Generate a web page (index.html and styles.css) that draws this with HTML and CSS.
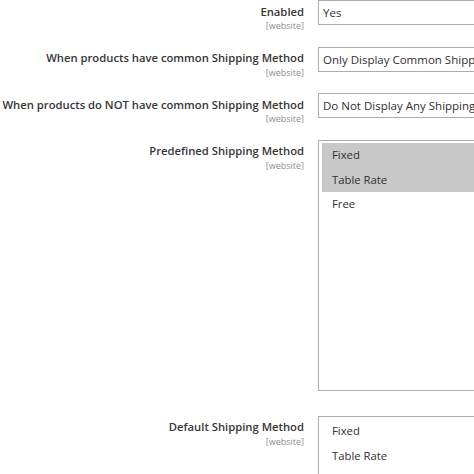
FILE: index.html
```html
<!DOCTYPE html>
<html>
<head>
<meta charset="utf-8">
<link rel="stylesheet" href="styles.css">
</head>
<body>
<div class="form">
  <div class="row">
    <div class="label"><span class="name">Enabled</span><span class="scope">[website]</span></div>
    <div class="control"><div class="select">Yes</div></div>
  </div>
  <div class="row">
    <div class="label"><span class="name">When products have common Shipping Method</span><span class="scope">[website]</span></div>
    <div class="control"><div class="select">Only Display Common Shipping Method</div></div>
  </div>
  <div class="row">
    <div class="label"><span class="name">When products do NOT have common Shipping Method</span><span class="scope">[website]</span></div>
    <div class="control"><div class="select">Do Not Display Any Shipping Method</div></div>
  </div>
  <div class="row row-list">
    <div class="label"><span class="name">Predefined Shipping Method</span><span class="scope">[website]</span></div>
    <div class="control">
      <div class="listbox tall">
        <div class="option selected">Fixed</div>
        <div class="option selected">Table Rate</div>
        <div class="option">Free</div>
      </div>
    </div>
  </div>
  <div class="row">
    <div class="label"><span class="name">Default Shipping Method</span><span class="scope">[website]</span></div>
    <div class="control">
      <div class="listbox short">
        <div class="option">Fixed</div>
        <div class="option">Table Rate</div>
        <div class="option">Free</div>
      </div>
    </div>
  </div>
</div>
</body>
</html>
```
FILE: styles.css
```css
html, body {
  margin: 0;
  padding: 0;
  background: #fff;
  overflow: hidden;
}
body {
  font-family: "Open Sans", "Liberation Sans", sans-serif;
  color: #303030;
  width: 474px;
  height: 474px;
}
.form {
  display: flex;
  flex-direction: column;
  gap: 21.5px;
}
.row {
  display: grid;
  grid-template-columns: 304px 200px;
  column-gap: 14px;
  align-items: start;
}
.row-list {
  margin-bottom: 3.5px;
}
.label {
  display: flex;
  flex-direction: column;
  align-items: flex-end;
  text-align: right;
  padding-top: 4.5px;
  height: 25px;
  box-sizing: border-box;
  white-space: nowrap;
}
.name {
  font-size: 11.25px;
  font-weight: 600;
  line-height: 14px;
  color: #363636;
}
.scope {
  margin-top: 1.5px;
  font-size: 9px;
  line-height: 12px;
  color: #8f8f8f;
}
.control {
  min-width: 0;
}
.select {
  box-sizing: border-box;
  height: 25px;
  border: 1px solid #adadad;
  border-right: none;
  padding: 0 0 0 4px;
  font-size: 11.5px;
  line-height: 23px;
  color: #303030;
  white-space: nowrap;
  overflow: hidden;
}
.listbox {
  box-sizing: border-box;
  border: 1px solid #adadad;
  border-right: none;
  padding: 2.5px 0 2.5px 3px;
  overflow: hidden;
}
.listbox.tall {
  height: 251px;
}
.listbox.short {
  height: 90px;
}
.option {
  height: 24.5px;
  line-height: 24.5px;
  padding-left: 10px;
  font-size: 11.3px;
  color: #303030;
  white-space: nowrap;
}
.option.selected {
  background: #c8c8c8;
}
```
